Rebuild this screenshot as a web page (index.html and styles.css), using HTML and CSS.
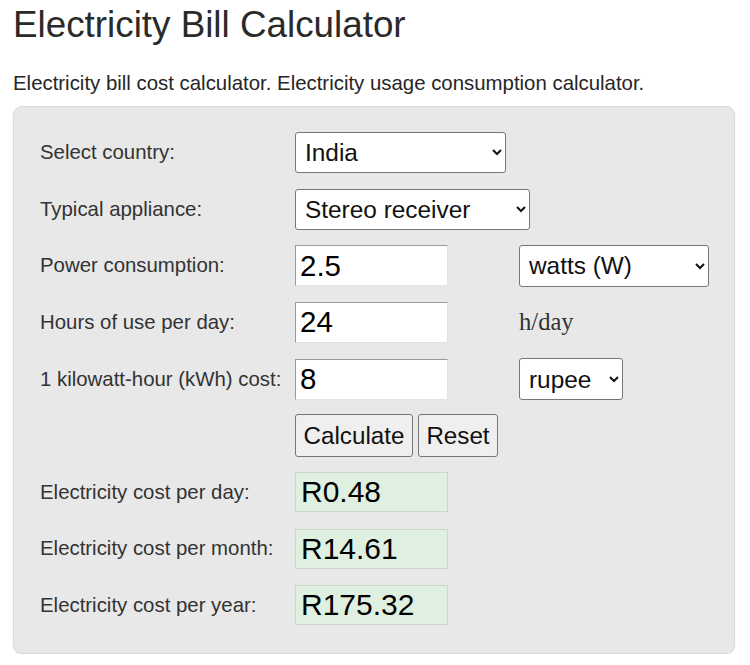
FILE: index.html
```html
<!DOCTYPE html>
<html>
<head>
<meta charset="utf-8">
<link rel="stylesheet" href="styles.css">
</head>
<body>
<h1 class="title">Electricity Bill Calculator</h1>
<p class="intro">Electricity bill cost calculator. Electricity usage consumption calculator.</p>
<div class="panel">
  <div class="form">
    <label class="lbl">Select country:</label>
    <div class="cell wide"><select class="sel sel-country"><option>India</option></select></div>

    <label class="lbl">Typical appliance:</label>
    <div class="cell wide"><select class="sel sel-app"><option>Stereo receiver</option></select></div>

    <label class="lbl">Power consumption:</label>
    <div class="cell"><input class="num" type="text" value="2.5"></div>
    <div class="cell"><select class="sel sel-unit"><option>watts (W)</option></select></div>

    <label class="lbl">Hours of use per day:</label>
    <div class="cell"><input class="num" type="text" value="24"></div>
    <div class="cell"><span class="unit">h/day</span></div>

    <label class="lbl">1 kilowatt-hour (kWh) cost:</label>
    <div class="cell"><input class="num" type="text" value="8"></div>
    <div class="cell"><select class="sel sel-cur"><option>rupee</option></select></div>

    <div class="lbl"></div>
    <div class="cell wide buttons"><button class="btn btn-calc">Calculate</button><button class="btn btn-reset">Reset</button></div>

    <label class="lbl">Electricity cost per day:</label>
    <div class="cell wide"><div class="out">R0.48</div></div>

    <label class="lbl">Electricity cost per month:</label>
    <div class="cell wide"><div class="out">R14.61</div></div>

    <label class="lbl">Electricity cost per year:</label>
    <div class="cell wide"><div class="out">R175.32</div></div>
  </div>
</div>
</body>
</html>
```
FILE: styles.css
```css
html, body {
  margin: 0;
  padding: 0;
  background: #ffffff;
}
body {
  padding: 0 13px;
  font-family: "Liberation Sans", Arial, sans-serif;
  color: #333333;
}
.title {
  margin: 4px 0 0;
  font-size: 36.8px;
  font-weight: normal;
  line-height: 42px;
  color: #2a2a2a;
}
.intro {
  margin: 26px 0 0;
  font-size: 20.4px;
  line-height: 23.4px;
  color: #262626;
}
.panel {
  margin-top: 11px;
  width: 694px;
  background: #e8e8e8;
  border: 1px solid #dadada;
  border-radius: 9px;
  box-shadow: 0 1px 2px rgba(0,0,0,0.08);
  padding: 17px 0 19px 26px;
}
.form {
  display: grid;
  grid-template-columns: 255px 224px auto;
  grid-auto-rows: 56.6px;
  align-items: center;
}
.lbl {
  grid-column: 1;
  font-size: 20.4px;
  color: #333333;
  white-space: nowrap;
}
.cell {
  display: flex;
  align-items: center;
}
.cell.wide {
  grid-column: 2 / 4;
}
.sel {
  height: 42px;
  font-family: "Liberation Sans", Arial, sans-serif;
  font-size: 24.4px;
  color: #111111;
  background: #ffffff;
  border: 1px solid #767676;
  border-radius: 3px;
  padding: 0 4px 0 5px;
  box-sizing: border-box;
}
.sel-country { width: 211px; height: 41px; }
.sel-app { width: 235px; height: 41px; }
.sel-unit { width: 190px; }
.sel-cur { width: 104px; }
.num {
  width: 153px;
  height: 41px;
  box-sizing: border-box;
  font-family: "Liberation Sans", Arial, sans-serif;
  font-size: 29.5px;
  color: #000000;
  background: #ffffff;
  border-style: solid;
  border-width: 1px;
  border-color: #9a9a9a #e2e2e2 #e2e2e2 #9a9a9a;
  padding: 0 4px;
  margin: 0;
}
.unit {
  font-family: "Liberation Serif", "Times New Roman", serif;
  font-size: 24.6px;
  color: #333333;
}
.buttons {
  gap: 5px;
}
.btn {
  height: 43px;
  box-sizing: border-box;
  font-family: "Liberation Sans", Arial, sans-serif;
  font-size: 24.2px;
  color: #111111;
  background: #efefef;
  border: 1px solid #767676;
  border-radius: 3px;
  padding: 0 7px;
  margin: 0;
}
.btn-calc { width: 118px; }
.btn-reset { width: 80px; }
.out {
  width: 153px;
  height: 40px;
  box-sizing: border-box;
  background: #e0f0e0;
  border: 1px solid #c9d7c9;
  font-size: 30px;
  line-height: 38px;
  color: #000000;
  padding: 0 5px;
}
```
